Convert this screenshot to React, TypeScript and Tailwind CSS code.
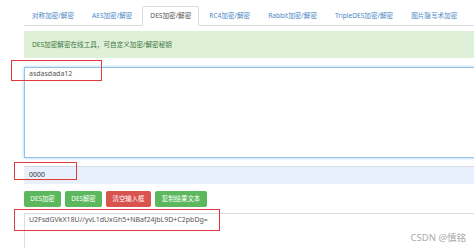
import React from "react";

const tabs = [
  "对称加密/解密",
  "AES加密/解密",
  "DES加密/解密",
  "RC4加密/解密",
  "Rabbit加密/解密",
  "TripleDES加密/解密",
  "图片隐写术加密",
  "Unicode",
];

export default function App() {
  return (
    <div
      className="relative w-[474px] h-[248px] overflow-hidden bg-white"
      style={{ fontFamily: '"Noto Sans", "Noto Sans CJK SC", sans-serif' }}
    >
      <div className="ml-[24px] w-[520px] pt-[6px]">
        {/* Tabs */}
        <div className="flex border-b border-[#dddddd] h-[20px]">
          {tabs.map((t) => (
            <div
              key={t}
              className={
                t === "DES加密/解密"
                  ? "px-[7px] h-[20px] flex items-center text-[6.6px] text-[#555555] bg-white border border-[#dddddd] border-b-white rounded-t-[2px] mr-[2px]"
                  : "px-[8px] h-[19px] flex items-center text-[6.6px] text-[#4a86c5] mr-[2px]"
              }
            >
              {t}
            </div>
          ))}
        </div>

        {/* Alert */}
        <div className="mt-[5px] h-[27px] bg-[#dff0d8] flex items-center px-[8px] text-[6.6px] text-[#3c763d]">
          DES加密解密在线工具，可自定义加密/解密秘钥
        </div>

        {/* Input textarea */}
        <div className="mt-[9px] h-[91px] border border-[#8fc1ea] shadow-[0_0_3px_rgba(102,175,233,0.6)] px-[4px] pt-[1px] text-[7px] text-[#555555]">
          asdasdada12
        </div>

        {/* Key */}
        <div className="mt-[8px] h-[18px] bg-[#e8f0fe] border-t border-[#d6dbe3] flex items-center px-[5px] text-[7px] text-[#333333]">
          0000
        </div>

        {/* Buttons */}
        <div className="mt-[7px] flex gap-[4px]">
          <button className="h-[16px] w-[37px] bg-[#5cb85c] text-white text-[6.4px] rounded-[2px] flex items-center justify-center">
            DES加密
          </button>
          <button className="h-[16px] w-[37px] bg-[#5cb85c] text-white text-[6.4px] rounded-[2px] flex items-center justify-center">
            DES解密
          </button>
          <button className="h-[16px] w-[45px] bg-[#d9534f] text-white text-[6.4px] rounded-[2px] flex items-center justify-center">
            清空输入框
          </button>
          <button className="h-[16px] w-[52px] bg-[#5cb85c] text-white text-[6.4px] rounded-[2px] flex items-center justify-center">
            复制结果文本
          </button>
        </div>

        {/* Output */}
        <div className="mt-[6px] h-[60px] border border-[#dddddd] px-[4px] pt-[1px] text-[7px] text-[#555555]">
          U2FsdGVkX18U//yvL1dUxGh5+NBaf24jbL9D+C2pbDg=
        </div>
      </div>

      {/* Annotation boxes */}
      <div className="absolute left-[11px] top-[60px] w-[91px] h-[21px] border-[1.5px] border-[#e03a3e]" />
      <div className="absolute left-[14px] top-[162px] w-[63px] h-[18px] border-[1.5px] border-[#e03a3e]" />
      <div className="absolute left-[14px] top-[209px] w-[206px] h-[22px] border-[1.5px] border-[#e03a3e]" />

      {/* Watermark */}
      <div className="absolute right-[8px] top-[231px] text-[9.5px] text-[#aaaaaa]">
        CSDN @慎铭
      </div>
    </div>
  );
}
